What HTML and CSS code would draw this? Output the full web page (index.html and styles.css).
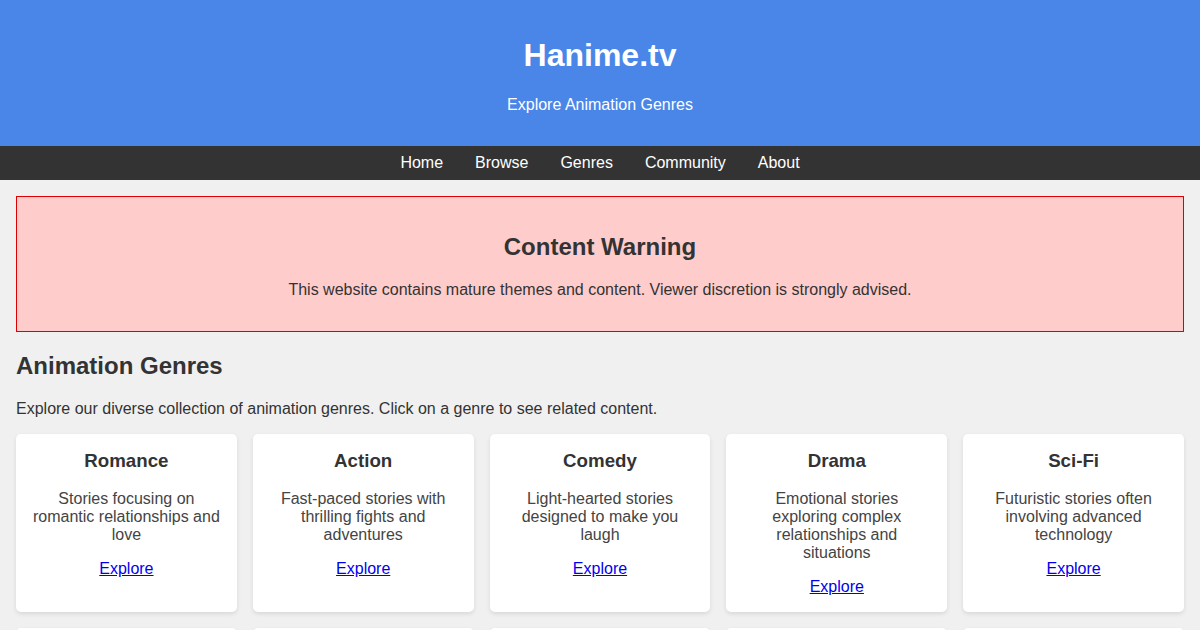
FILE: index.html
```html
<!DOCTYPE html>
<html lang="en">
	<head>
		<meta charset="utf-8" />
		<title>Hanime.tv - Explore Animation Genres</title>
		<link rel="stylesheet" href="styles.css">
	</head>

	<body>
		<header class="site-header">
			<h1>Hanime.tv</h1>
			<p>Explore Animation Genres</p>
		</header>

		<nav class="site-nav">
			<a href="#">Home</a>
			<a href="#">Browse</a>
			<a href="#">Genres</a>
			<a href="#">Community</a>
			<a href="#">About</a>
		</nav>

		<main class="content">
			<section class="warning">
				<h2>Content Warning</h2>
				<p>This website contains mature themes and content. Viewer discretion is strongly advised.</p>
			</section>

			<h2>Animation Genres</h2>
			<p>Explore our diverse collection of animation genres. Click on a genre to see related content.</p>

			<div class="genre-grid">
				<div class="genre-card">
					<h3>Romance</h3>
					<p>Stories focusing on romantic relationships and love</p>
					<a href="#">Explore</a>
				</div>
				<div class="genre-card">
					<h3>Action</h3>
					<p>Fast-paced stories with thrilling fights and adventures</p>
					<a href="#">Explore</a>
				</div>
				<div class="genre-card">
					<h3>Comedy</h3>
					<p>Light-hearted stories designed to make you laugh</p>
					<a href="#">Explore</a>
				</div>
				<div class="genre-card">
					<h3>Drama</h3>
					<p>Emotional stories exploring complex relationships and situations</p>
					<a href="#">Explore</a>
				</div>
				<div class="genre-card">
					<h3>Sci-Fi</h3>
					<p>Futuristic stories often involving advanced technology</p>
					<a href="#">Explore</a>
				</div>
				<div class="genre-card">
					<h3>Fantasy</h3>
					<p>Magical worlds filled with mythical creatures</p>
					<a href="#">Explore</a>
				</div>
				<div class="genre-card">
					<h3>Horror</h3>
					<p>Dark tales meant to frighten and unsettle</p>
					<a href="#">Explore</a>
				</div>
				<div class="genre-card">
					<h3>Mystery</h3>
					<p>Puzzling stories full of secrets and clues</p>
					<a href="#">Explore</a>
				</div>
				<div class="genre-card">
					<h3>Slice of Life</h3>
					<p>Everyday moments of ordinary characters</p>
					<a href="#">Explore</a>
				</div>
				<div class="genre-card">
					<h3>Adventure</h3>
					<p>Journeys into unknown lands and places</p>
					<a href="#">Explore</a>
				</div>
			</div>
		</main>
	</body>
</html>
```

FILE: styles.css
```css
body {
	margin: 0;
	font-family: "Liberation Sans", Arial, sans-serif;
	background: #f0f0f0;
	color: #333;
}
.site-header {
	background: #4a86e8;
	color: #fff;
	text-align: center;
	padding: 16px;
}
.site-header h1 {
	font-size: 2em;
	margin: 0.67em 0;
}
.site-header p {
	margin: 16px 0;
}
.site-nav {
	background: #333;
	display: flex;
	justify-content: center;
	gap: 32px;
	padding: 8px 0;
	line-height: 18px;
}
.site-nav a {
	color: #fff;
	text-decoration: none;
}
.content {
	padding: 16px;
}
.content h2 {
	font-size: 1.5em;
	margin: 0.83em 0;
}
.warning {
	background: #ffcccc;
	border: 1px solid #d00;
	padding: 16px;
	text-align: center;
}
.genre-grid {
	display: grid;
	grid-template-columns: repeat(5, 1fr);
	gap: 16px;
}
.genre-card {
	background: #fff;
	border-radius: 5px;
	box-shadow: 0 2px 4px rgba(0, 0, 0, 0.1);
	padding: 16px;
	text-align: center;
}
.genre-card h3 {
	font-size: 1.17em;
	margin: 0 0 18px;
}
.genre-card p {
	margin: 0;
	color: #444;
}
.genre-card a {
	display: inline-block;
	margin-top: 16px;
	color: #0000ee;
}
```
